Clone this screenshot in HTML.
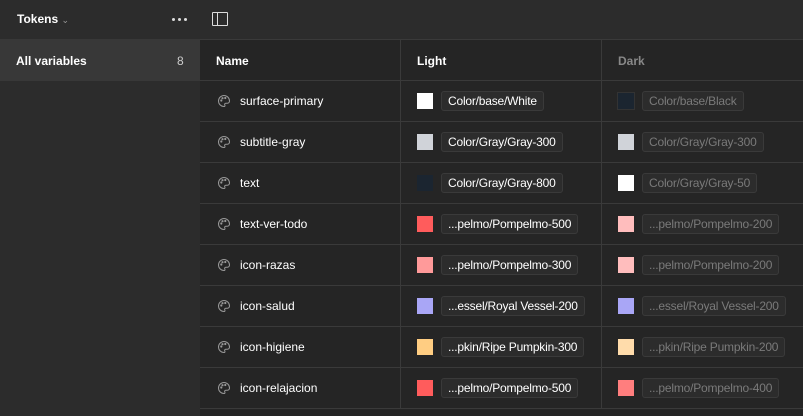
<!DOCTYPE html>
<html><head><style>
*{box-sizing:border-box;margin:0;padding:0}
body{width:803px;height:416px;overflow:hidden;background:#252525;font-family:"Liberation Sans",sans-serif;color:#fff;font-size:12px;position:relative}
.side{position:absolute;left:0;top:0;width:200px;height:416px;background:#2c2c2c}
.top{position:absolute;left:200px;top:0;width:603px;height:39px;background:#2c2c2c}
.sel{position:absolute;left:0;top:39px;width:200px;height:42px;background:#383838}
.abs{position:absolute}
.row{position:absolute;left:200px;width:603px;height:41px;border-bottom:1px solid #3a3a3a}
.cell{position:absolute;top:0;height:40px;border-right:1px solid #3a3a3a}
.sw{position:absolute;left:16px;top:12px;width:16px;height:16px}
.chip{position:absolute;left:40px;top:10px;height:20px;border:1px solid #3a3a3a;background:#2c2c2c;border-radius:3px;padding:0 6px;line-height:18px;font-size:12px;white-space:nowrap;letter-spacing:-0.2px}
.dk .chip{color:#7a7a7a}
.nm{position:absolute;left:40px;top:0;line-height:40px}
.ic{position:absolute;left:17px;top:13px}
</style></head><body>
<div class="side"></div>
<div class="top"></div>
<div class="sel"></div>
<div class="abs" style="left:17px;top:12px;font-weight:bold;font-size:12px">Tokens <span style="color:#999;font-weight:normal;font-size:9px">&#8964;</span></div>
<div class="abs" style="left:172px;top:18px;width:3px;height:3px;border-radius:50%;background:#ddd"></div>
<div class="abs" style="left:178px;top:18px;width:3px;height:3px;border-radius:50%;background:#ddd"></div>
<div class="abs" style="left:184px;top:18px;width:3px;height:3px;border-radius:50%;background:#ddd"></div>
<div class="abs" style="left:16px;top:54px;font-weight:bold">All variables</div>
<div class="abs" style="left:177px;top:54px;color:#ccc">8</div>
<div class="abs" style="left:212px;top:12px;width:16px;height:14px;border:1.3px solid #ddd;border-radius:1px"></div>
<div class="abs" style="left:217px;top:12px;width:1.3px;height:14px;background:#ddd"></div>

<div class="row" style="top:39px;height:42px;border-top:1px solid #3a3a3a">
 <div class="cell" style="left:0;width:201px;height:41px"><div class="abs" style="left:16px;top:14px;font-weight:bold">Name</div></div>
 <div class="cell" style="left:201px;width:201px;height:41px"><div class="abs" style="left:16px;top:14px;font-weight:bold">Light</div></div>
 <div class="abs" style="left:418px;top:14px;font-weight:bold;color:#888">Dark</div>
</div>

<div id="rows"></div>
<script>
var d=[["surface-primary","#ffffff","Color/base/White","#1b2530","Color/base/Black"],
["subtitle-gray","#d0d3d9","Color/Gray/Gray-300","#d0d3d9","Color/Gray/Gray-300"],
["text","#1b2530","Color/Gray/Gray-800","#ffffff","Color/Gray/Gray-50"],
["text-ver-todo","#ff5c5c","...pelmo/Pompelmo-500","#ffbdbd","...pelmo/Pompelmo-200"],
["icon-razas","#ff9a9a","...pelmo/Pompelmo-300","#ffbdbd","...pelmo/Pompelmo-200"],
["icon-salud","#a9a6f6","...essel/Royal Vessel-200","#a9a6f6","...essel/Royal Vessel-200"],
["icon-higiene","#ffcd82","...pkin/Ripe Pumpkin-300","#ffdcab","...pkin/Ripe Pumpkin-200"],
["icon-relajacion","#ff5c5c","...pelmo/Pompelmo-500","#ff7e7e","...pelmo/Pompelmo-400"]];
var ic='<svg class="ic" width="14" height="14" viewBox="0 0 14 14" fill="none" stroke="#999" stroke-width="1"><path d="M7 1.5a5.5 5.5 0 1 0 0 11c1 0 1.2-.8.8-1.5-.5-.8 0-1.7 1-1.7h1.6A2.2 2.2 0 0 0 12.5 7 5.5 5.5 0 0 0 7 1.5z"/><circle cx="4.3" cy="6.5" r=".6" fill="#999"/><circle cx="5.5" cy="4.2" r=".6" fill="#999"/><circle cx="8.3" cy="4" r=".6" fill="#999"/></svg>';
var h='';
for(var i=0;i<8;i++){var r=d[i];
h+='<div class="row" style="top:'+(81+i*41)+'px"><div class="cell" style="left:0;width:201px">'+ic+'<div class="nm">'+r[0]+'</div></div>'+
'<div class="cell" style="left:201px;width:201px"><div class="sw" style="background:'+r[1]+'"></div><div class="chip">'+r[2]+'</div></div>'+
'<div class="cell dk" style="left:402px;width:201px;border-right:none"><div class="sw" style="background:'+r[3]+(r[3]=="#1b2530"?';outline:1px solid #333':'')+'"></div><div class="chip">'+r[4]+'</div></div></div>';}
document.getElementById('rows').innerHTML=h;
</script>
</body></html>
